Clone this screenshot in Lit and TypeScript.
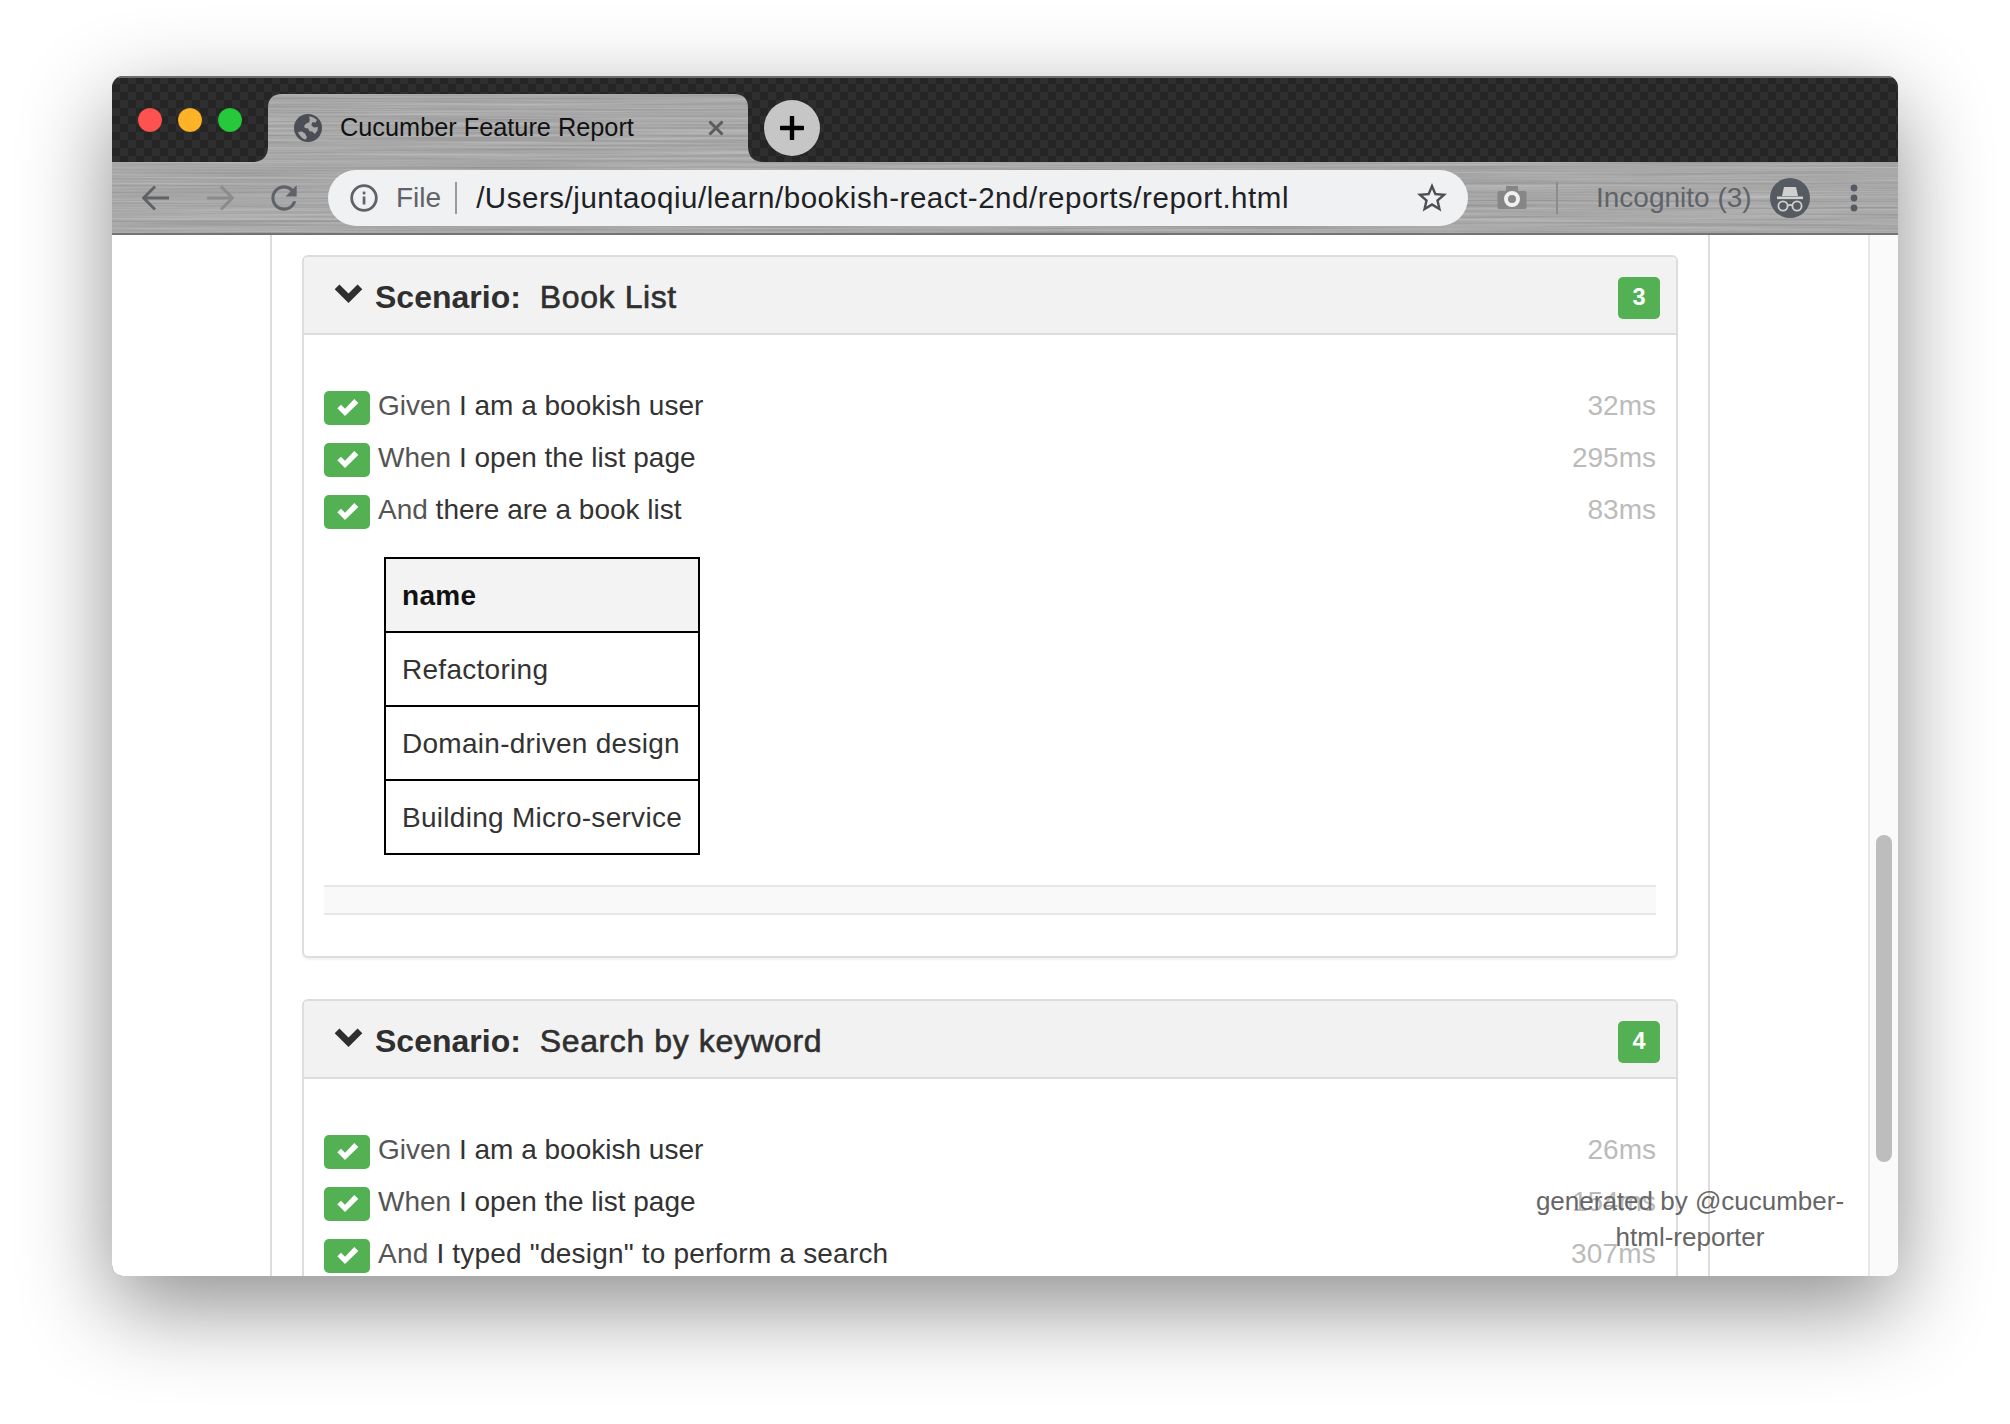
import { LitElement, html, css, svg } from "lit";
import { customElement } from "lit/decorators.js";

interface Step { kw: string; text: string; time: string; wide?: boolean; }
interface Scenario { name: string; count: number; steps: Step[]; table?: string[]; }

const scenarios: Scenario[] = [
  {
    name: "Book List",
    count: 3,
    steps: [
      { kw: "Given", text: " I am a bookish user", time: "32ms" },
      { kw: "When", text: " I open the list page", time: "295ms" },
      { kw: "And", text: " there are a book list", time: "83ms" },
    ],
    table: ["Refactoring", "Domain-driven design", "Building Micro-service"],
  },
  {
    name: "Search by keyword",
    count: 4,
    steps: [
      { kw: "Given", text: " I am a bookish user", time: "26ms" },
      { kw: "When", text: " I open the list page", time: "154ms" },
      { kw: "And", text: ' I typed "design" to perform a search', time: "307ms", wide: true },
    ],
  },
];

const chevron = html`<svg class="chev" viewBox="0 0 30 21"><polygon points="0.5,5.5 5.5,0.5 15,10 24.5,0.5 29.5,5.5 15,20"></polygon></svg>`;
const tick = html`<svg class="tick" viewBox="0 0 46 34"><polygon points="13.3,17.3 17,13.7 21,17.7 30.3,8 34.3,12 21,25"></polygon></svg>`;

@customElement("app-root")
export class AppRoot extends LitElement {
  static styles = css`
    :host { display: block; width: 2010px; height: 1424px; overflow: hidden; background: #fff; font-family: "Liberation Sans", Arial, sans-serif; color: #333; }
    .window { position: relative; width: 1786px; height: 1200px; margin: 76px 0 0 112px; border-radius: 11px; overflow: hidden; display: flex; flex-direction: column; background-color: #2a2a2a; background-image: conic-gradient(#252525 25%, #2e2e2e 0 50%, #252525 0 75%, #2e2e2e 0); background-size: 16px 16px; }
    .shadow { position: absolute; left: 112px; top: 76px; width: 1786px; height: 1200px; border-radius: 11px; box-shadow: 0 30px 90px 0 rgba(0,0,0,.45); }
    .titlebar { position: relative; height: 86px; flex: none; display: flex; border-top: 2px solid #6d6d6d; box-sizing: border-box; }
    .metal { position: absolute; left: 0; top: 0; width: 1786px; height: 159px; }
    .lights { position: relative; display: flex; gap: 16px; padding: 30px 0 0 26px; width: 130px; box-sizing: content-box; flex: none; }
    .light { width: 24px; height: 24px; border-radius: 50%; box-shadow: inset 0 0 1px rgba(0,0,0,.35); }
    .tab { position: relative; flex: none; width: 480px; margin-top: 16px; display: flex; align-items: center; padding: 0 0 0 26px; box-sizing: border-box; height: 68px; }
    .tab-title { font-size: 25.3px; color: #111; margin-left: 18px; padding-bottom: 2px; white-space: nowrap; }
    .tab-x { margin-left: auto; margin-right: 24px; width: 16px; height: 16px; }
    .plus { position: relative; flex: none; width: 56px; height: 56px; border-radius: 50%; background: #c6c6c6; margin: 22px 0 0 16px; display: flex; align-items: center; justify-content: center; }
    .toolbar { position: relative; height: 73px; flex: none; box-sizing: border-box; border-bottom: 2px solid #737373; display: flex; align-items: center; padding-left: 12px; }
    .nav { width: 64px; display: flex; justify-content: center; flex: none; }
    .omni { flex: none; width: 1140px; height: 56px; margin: 0 0 0 12px; border-radius: 28px; background: #f0f1f3; display: flex; align-items: center; padding: 0 18px 0 22px; box-sizing: border-box; }
    .file { font-size: 28px; color: #5f6368; margin-left: 18px; }
    .sep { width: 2px; height: 32px; background: #9a9a9a; margin: 0 19px 0 14px; flex: none; }
    .url { font-size: 29.5px; color: #202124; white-space: nowrap; letter-spacing: .54px; }
    .star { margin-left: auto; flex: none; }
    .cam { margin-left: 29px; flex: none; }
    .vsep { width: 2px; height: 32px; background: #8c8c8c; margin-left: 29px; flex: none; }
    .incog { font-size: 28px; color: #5f6368; margin-left: 38px; white-space: nowrap; }
    .incog-ic { margin-left: 18px; flex: none; }
    .dots { margin-left: 40px; flex: none; }
    .viewport { position: relative; flex: 1; min-height: 0; display: flex; overflow: hidden; background: #fff; }
    .page { flex: 1; min-width: 0; padding-left: 158px; }
    .container { width: 1440px; box-sizing: border-box; height: 100%; border-left: 2px solid #ddd; border-right: 2px solid #ddd; padding: 20px 30px 0 30px; overflow: hidden; }
    .panel { border: 2px solid #ddd; border-radius: 6px; box-shadow: 0 2px 2px rgba(0,0,0,.05); margin-bottom: 41px; background: #fff; }
    .phead { height: 73px; padding: 3px 16px 0 30px; background: #f2f2f2; border-bottom: 2px solid #ddd; display: flex; align-items: center; border-radius: 4px 4px 0 0; }
    .chev { width: 29px; height: 20px; fill: #2f2f2f; flex: none; margin-top: -5px; }
    .ptitle { font-size: 32px; color: #2f2f2f; margin-left: 12px; white-space: nowrap; padding-top: 2px; }
    .ptitle b { font-weight: 700; margin-right: 19px; }
    .pname { -webkit-text-stroke: .6px #2f2f2f; letter-spacing: .6px; }
    .count { margin-left: auto; width: 42px; height: 42px; margin-top: 2px; border-radius: 5px; background: #53b153; color: #fff; font-weight: 700; font-size: 23.5px; display: flex; align-items: center; justify-content: center; }
    .pbody { padding: 45px 20px 41px 20px; }
    .step { display: flex; height: 52px; align-items: center; font-size: 28px; }
    .step.wide { letter-spacing: .2px; }
    .check { width: 46px; height: 34px; border-radius: 5px; background: #53b153; flex: none; margin: 3px 8px 0 0; position: relative; }
    .tick { display: block; width: 46px; height: 34px; fill: #fff; }
    .kw { color: #555; }
    .txt { color: #333; white-space: pre; }
    .time { margin-left: auto; color: #bbb; }
    table { border-collapse: collapse; margin: 21px 0 0 60px; font-size: 28px; color: #333; letter-spacing: .28px; }
    th, td { border: 2px solid #000; height: 74px; box-sizing: border-box; padding: 2px 16px 0 16px; text-align: left; white-space: nowrap; }
    th { background: #f3f3f3; color: #111; font-weight: 700; }
    .strip { height: 26px; margin-top: 30px; background: #f9f9f9; border-top: 2px solid #e6e6e6; border-bottom: 2px solid #e6e6e6; }
    .scrollbar { flex: none; width: 30px; box-sizing: border-box; background: #fafafa; border-left: 2px solid #e8e8e8; position: relative; padding: 600px 6px 0 6px; }
    .thumb { width: 16px; height: 327px; border-radius: 8px; background: #bdbdbd; }
    .footer { position: absolute; left: 1408px; top: 948px; width: 340px; text-align: center; font-size: 26px; line-height: 36px; color: #666; }
  `;

  private metal() {
    return svg`<svg class="metal" viewBox="0 0 1786 159" aria-hidden="true">
      <defs><filter id="brush" x="0" y="0" width="100%" height="100%" color-interpolation-filters="sRGB">
        <feTurbulence type="fractalNoise" baseFrequency="0.004 0.45" numOctaves="3" seed="7"></feTurbulence>
        <feColorMatrix type="matrix" values="0.2 0 0 0 0.56  0.2 0 0 0 0.56  0.2 0 0 0 0.56  0 0 0 0 1"></feColorMatrix>
        <feComposite in2="SourceAlpha" operator="in"></feComposite>
      </filter></defs>
      <path filter="url(#brush)" d="M0 86 H140 Q156 86 156 70 V32 Q156 18 170 18 H622 Q636 18 636 32 V70 Q636 86 652 86 H1786 V159 H0 Z"></path>
    </svg>`;
  }

  private panel(s: Scenario) {
    return html`<section class="panel">
      <header class="phead">
        ${chevron}
        <div class="ptitle"><b>Scenario:</b><span class="pname">${s.name}</span></div>
        <div class="count">${s.count}</div>
      </header>
      <div class="pbody">
        ${s.steps.map((st) => html`<div class="step ${st.wide ? "wide" : ""}">
          <span class="check">${tick}</span>
          <span class="kw">${st.kw}</span><span class="txt">${st.text}</span>
          <span class="time">${st.time}</span>
        </div>`)}
        ${s.table
          ? html`<table>
                <tr><th>name</th></tr>
                ${s.table.map((r) => html`<tr><td>${r}</td></tr>`)}
              </table>
              <div class="strip"></div>`
          : ""}
      </div>
    </section>`;
  }

  render() {
    return html`
      <div class="shadow"></div>
      <div class="window">
        ${this.metal()}
        <div class="titlebar">
          <div class="lights">
            <span class="light" style="background:#fc5350"></span>
            <span class="light" style="background:#fdb327"></span>
            <span class="light" style="background:#26c83c"></span>
          </div>
          <div class="tab">
            <svg width="28" height="28" viewBox="0 0 28 28">
              <circle cx="14" cy="14" r="14" fill="#4c4e55"></circle>
              <path fill="#a9a9a9" d="M15 2.5c3 .2 6 1.4 8 3.6l-1.5 2.4-3.2-.3-1 3 2.6 2.4 4-.6-.4 3.4-2.6 3.6-2.8-2.6-2.6-.2-1.4-2.6-3.4-.6-.4-2.8 2.8-2.2 2.2-.8.4-2.6z M4 18l4-.6 3 2 2 3.8-1.4 2.4C8.6 25 5.6 22 4 18z"></path>
            </svg>
            <span class="tab-title">Cucumber Feature Report</span>
            <svg class="tab-x" viewBox="0 0 16 16"><path d="M1.5 1.5l13 13M14.5 1.5l-13 13" stroke="#5c5c5c" stroke-width="3" fill="none"></path></svg>
          </div>
          <div class="plus">
            <svg width="24" height="24" viewBox="0 0 24 24"><path d="M12 1v22M1 12h22" stroke="#000" stroke-width="4.4" stroke-linecap="round" fill="none"></path></svg>
          </div>
        </div>
        <div class="toolbar">
          <div class="nav"><svg width="28" height="26" viewBox="0 0 28 26"><path d="M27 13H2M13 1.5L1.5 13 13 24.5" stroke="#5f6368" stroke-width="3" fill="none"></path></svg></div>
          <div class="nav"><svg width="28" height="26" viewBox="0 0 28 26"><path d="M1 13h25M15 1.5L26.5 13 15 24.5" stroke="#8b8b8b" stroke-width="3" fill="none"></path></svg></div>
          <div class="nav"><svg width="38" height="38" viewBox="0 0 24 24"><path fill="#5f6368" d="M17.65 6.35A7.958 7.958 0 0 0 12 4c-4.42 0-7.99 3.58-7.99 8s3.57 8 7.99 8c3.73 0 6.84-2.55 7.73-6h-2.08A5.99 5.99 0 0 1 12 18c-3.31 0-6-2.69-6-6s2.69-6 6-6c1.66 0 3.14.69 4.22 1.78L13 11h7V4l-2.35 2.35z"></path></svg></div>
          <div class="omni">
            <svg width="28" height="28" viewBox="0 0 28 28" style="flex:none">
              <circle cx="14" cy="14" r="12.3" fill="none" stroke="#5f6368" stroke-width="2.8"></circle>
              <rect x="12.7" y="12.5" width="2.7" height="8" fill="#5f6368"></rect><rect x="12.7" y="7.6" width="2.7" height="2.8" fill="#5f6368"></rect>
            </svg>
            <span class="file">File</span><span class="sep"></span>
            <span class="url">/Users/juntaoqiu/learn/bookish-react-2nd/reports/report.html</span>
            <svg class="star" width="36" height="36" viewBox="0 0 24 24"><path fill="#4d4f55" d="M22 9.24l-7.19-.62L12 2 9.19 8.63 2 9.24l5.46 4.73L5.82 21 12 17.27 18.18 21l-1.63-7.03L22 9.24zM12 15.4l-3.76 2.27 1-4.28-3.32-2.88 4.38-.38L12 6.1l1.71 4.04 4.38.38-3.32 2.88 1 4.28L12 15.4z"></path></svg>
          </div>
          <svg class="cam" width="30" height="26" viewBox="0 0 30 26">
            <rect x="0.5" y="6" width="29" height="18" rx="1.5" fill="#868686"></rect><rect x="9" y="1" width="12" height="6" fill="#868686"></rect>
            <circle cx="15" cy="14" r="6" fill="none" stroke="#f0f0f0" stroke-width="4"></circle>
          </svg>
          <span class="vsep"></span>
          <span class="incog">Incognito (3)</span>
          <svg class="incog-ic" width="40" height="40" viewBox="0 0 40 40">
            <circle cx="20" cy="20" r="20" fill="#565a61"></circle>
            <path fill="#d0d0d0" d="M14 9h12l2 9H12z"></path><rect x="7" y="18.5" width="26" height="2.6" fill="#d0d0d0"></rect>
            <circle cx="13" cy="28" r="4.6" fill="none" stroke="#d0d0d0" stroke-width="1.8"></circle><circle cx="27" cy="28" r="4.6" fill="none" stroke="#d0d0d0" stroke-width="1.8"></circle>
            <path d="M17.6 27.5q2.4-1.4 4.8 0" fill="none" stroke="#d0d0d0" stroke-width="1.8"></path>
          </svg>
          <svg class="dots" width="8" height="28" viewBox="0 0 8 28"><circle cx="4" cy="4" r="3.4" fill="#565a61"></circle><circle cx="4" cy="14" r="3.4" fill="#565a61"></circle><circle cx="4" cy="24" r="3.4" fill="#565a61"></circle></svg>
        </div>
        <div class="viewport">
          <div class="page"><div class="container">${scenarios.map((s) => this.panel(s))}</div></div>
          <div class="scrollbar"><div class="thumb"></div></div>
          <div class="footer">generated by @cucumber-html-reporter</div>
        </div>
      </div>
    `;
  }
}
